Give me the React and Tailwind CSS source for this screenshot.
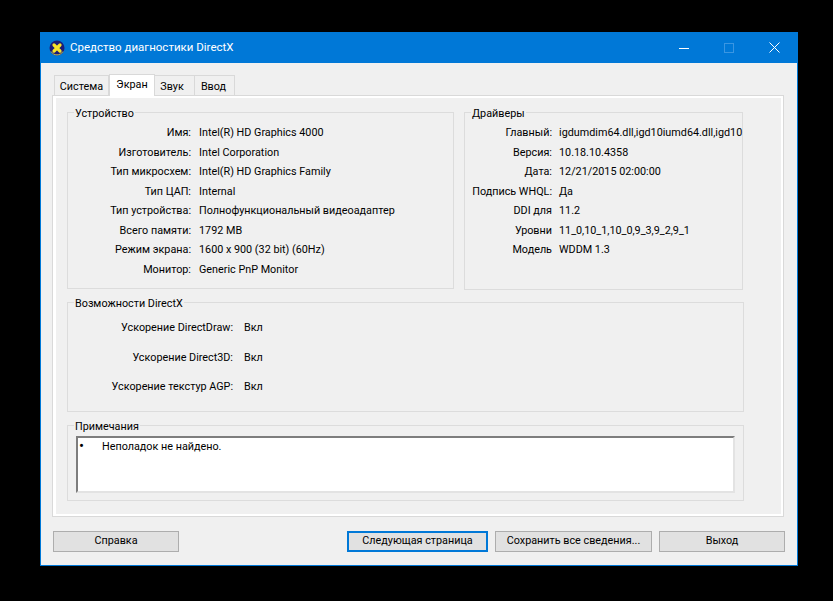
import React from "react";

const deviceRows = [
  ["Имя:", "Intel(R) HD Graphics 4000"],
  ["Изготовитель:", "Intel Corporation"],
  ["Тип микросхем:", "Intel(R) HD Graphics Family"],
  ["Тип ЦАП:", "Internal"],
  ["Тип устройства:", "Полнофункциональный видеоадаптер"],
  ["Всего памяти:", "1792 MB"],
  ["Режим экрана:", "1600 x 900 (32 bit) (60Hz)"],
  ["Монитор:", "Generic PnP Monitor"],
];

const driverRows = [
  ["Главный:", "igdumdim64.dll,igd10iumd64.dll,igd10"],
  ["Версия:", "10.18.10.4358"],
  ["Дата:", "12/21/2015 02:00:00"],
  ["Подпись WHQL:", "Да"],
  ["DDI для", "11.2"],
  ["Уровни", "11_0,10_1,10_0,9_3,9_2,9_1"],
  ["Модель", "WDDM 1.3"],
];

const featureRows = [
  ["Ускорение DirectDraw:", "Вкл"],
  ["Ускорение Direct3D:", "Вкл"],
  ["Ускорение текстур AGP:", "Вкл"],
];

function GroupBox({ title, className = "", children }) {
  return (
    <div className={`relative border border-[#dcdcdc] ${className}`}>
      <span className="absolute top-[-7px] left-[6px] bg-[#f0f0f0] px-[1px] leading-[15px] whitespace-nowrap">{title}</span>
      {children}
    </div>
  );
}

function Row({ label, value }) {
  return (
    <>
      <span className="text-right whitespace-nowrap">{label}</span>
      <span className="whitespace-nowrap">{value}</span>
    </>
  );
}

function Button({ children, className = "" }) {
  return (
    <button className={`h-[21px] bg-[#e1e1e1] flex items-center justify-center leading-none ${className}`}>
      {children}
    </button>
  );
}

function Tab({ children, active, className = "" }) {
  if (active) {
    return (
      <div className={`h-[22px] bg-white border border-b-0 border-[#d9d9d9] flex items-center justify-center relative z-10 mb-[-1px] pb-[1px] ${className}`}>
        {children}
      </div>
    );
  }
  return (
    <div className={`h-[20px] bg-[#f0f0f0] border border-b-0 border-[#d9d9d9] flex items-center justify-center pt-[3px] ${className}`}>
      {children}
    </div>
  );
}

export default function App() {
  return (
    <div className="w-[833px] h-[601px] bg-black pt-[32px] pl-[40px] overflow-hidden text-[10.8px] text-black font-['Roboto',sans-serif]">
      <div className="w-[758px] h-[534px] bg-[#f0f0f0] border border-t-0 border-[#0078d7] flex flex-col">
        {/* Title bar */}
        <div className="h-[31px] shrink-0 bg-[#0078d7] text-white flex items-center pl-[9px] mx-[-1px]">
          <svg width="16" height="16" viewBox="0 0 16 16" className="shrink-0">
            <circle cx="8" cy="8" r="7.5" fill="#1c1c78" />
            <path d="M2 11.5A7 7 0 0 0 14 11.5" fill="none" stroke="#c9c04a" strokeWidth="1" />
            <path d="M5 5 L11 11 M11 5 L5 11" stroke="#f7e32b" strokeWidth="3.2" strokeLinecap="round" />
          </svg>
          <span className="ml-[5px] text-[11.5px]">Средство диагностики DirectX</span>
          <div className="ml-auto flex items-center pr-[18px] gap-[35px]">
            <svg width="10" height="10" viewBox="0 0 10 10"><path d="M0 5.5H10" stroke="#fff" /></svg>
            <svg width="10" height="10" viewBox="0 0 10 10"><rect x="0.5" y="0.5" width="9" height="9" fill="none" stroke="#3a96e2" /></svg>
            <svg width="11" height="11" viewBox="0 0 11 11"><path d="M0.5 0.5L10.5 10.5M10.5 0.5L0.5 10.5" stroke="#fff" /></svg>
          </div>
        </div>

        {/* Tabs + page */}
        <div className="pl-[11px] pt-[11px] flex flex-col">
          <div className="flex items-end h-[21px] pl-[2px]">
            <Tab className="w-[55px]">Система</Tab>
            <Tab active className="w-[46px]">Экран</Tab>
            <Tab className="w-[40px] border-l-0 pr-[5px]">Звук</Tab>
            <Tab className="w-[40px] border-l-0 pr-[2px]">Ввод</Tab>
          </div>
          <div className="w-[732px] h-[422px] bg-[#f0f0f0] border border-[#d9d9d9] shadow-[inset_0_0_0_2px_#fff,inset_3px_0_0_0_#fff] pt-[16px] pl-[14px]">
            <div className="flex gap-[10px]">
              <GroupBox title="Устройство" className="w-[387px] h-[177px]">
                <div className="grid grid-cols-[123px_1fr] gap-x-[8px] auto-rows-[19.5px] items-center pt-[10.5px]">
                  {deviceRows.map(([label, value]) => (
                    <Row key={label} label={label} value={value} />
                  ))}
                </div>
              </GroupBox>
              <GroupBox title="Драйверы" className="w-[279px] h-[178px]">
                <div className="grid grid-cols-[87px_1fr] gap-x-[7px] auto-rows-[19.5px] items-center pt-[10.5px]">
                  {driverRows.map(([label, value]) => (
                    <Row key={label} label={label} value={value} />
                  ))}
                </div>
              </GroupBox>
            </div>

            <GroupBox title="Возможности DirectX" className="w-[677px] h-[110px] mt-[12px]">
              <div className="grid grid-cols-[165px_1fr] gap-x-[11px] auto-rows-[29.5px] items-center pt-[10.5px]">
                {featureRows.map(([label, value]) => (
                  <Row key={label} label={label} value={value} />
                ))}
              </div>
            </GroupBox>

            <GroupBox title="Примечания" className="w-[677px] h-[76px] mt-[13px] pt-[10px] pl-[8px]">
              <div className="w-[659px] h-[57px] bg-white border-2 border-t-[#7d7d7d] border-l-[#7d7d7d] border-r-[#e3e3e3] border-b-[#e3e3e3] flex pl-[1px] pt-[1px] leading-[15px]">
                <span className="w-[23px] text-[15px]">•</span>
                <span>Неполадок не найдено.</span>
              </div>
            </GroupBox>
          </div>
        </div>

        {/* Footer buttons */}
        <div className="flex pl-[12px] mt-[14px]">
          <Button className="w-[126px] border border-[#adadad]">Справка</Button>
          <Button className="w-[141px] ml-[168px] border-2 border-[#0078d7]">Следующая страница</Button>
          <Button className="w-[157px] ml-[7px] border border-[#adadad]">Сохранить все сведения...</Button>
          <Button className="w-[126px] ml-[7px] border border-[#adadad]">Выход</Button>
        </div>
      </div>
    </div>
  );
}
